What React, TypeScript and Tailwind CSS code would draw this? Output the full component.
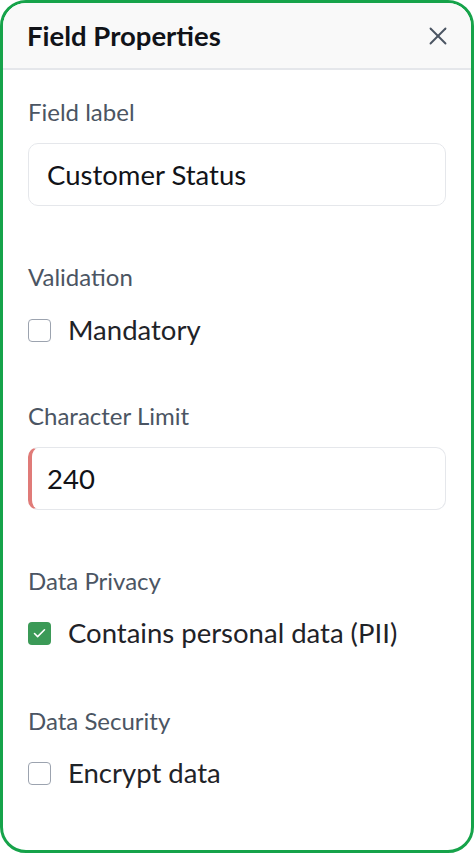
import { X, Check } from "lucide-react";

function Label({ children }: { children: React.ReactNode }) {
  return <p className="text-[24px] leading-[28px] text-[#4b5563]">{children}</p>;
}

function Checkbox({ checked, label }: { checked?: boolean; label: string }) {
  return (
    <label className="flex items-center gap-[17px]">
      {checked ? (
        <span className="flex h-[23px] w-[23px] items-center justify-center rounded-[4px] bg-[#3b9a57]">
          <Check className="h-[15px] w-[15px] text-white" strokeWidth={2.5} />
        </span>
      ) : (
        <span className="h-[23px] w-[23px] rounded-[4px] border-[1.5px] border-[#9ca3af] bg-white" />
      )}
      <span className="text-[27.5px] leading-[32px] text-[#1f2328]">{label}</span>
    </label>
  );
}

export default function App() {
  return (
    <div
      className="h-[853px] w-[474px] bg-white"
      style={{ fontFamily: "Lato, 'Noto Sans', sans-serif" }}
    >
      <div className="flex h-full flex-col overflow-hidden rounded-[26px] border-[3px] border-[#16a34a] bg-white">
        <header className="flex h-[67px] items-center justify-between border-b-2 border-[#e5e7eb] bg-[#f9f9f9] pl-[24px] pr-[18px]">
          <h1 className="text-[27.5px] font-bold text-[#111318]">Field Properties</h1>
          <X className="h-[30px] w-[30px] text-[#4b5563]" strokeWidth={1.5} />
        </header>

        <div className="flex flex-col px-[25px] pt-[28px]">
          <Label>Field label</Label>
          <div className="mt-[17px] flex h-[63px] items-center rounded-[10px] border-[1.5px] border-[#e5e7eb] px-[18px]">
            <span className="text-[27.5px] text-[#111318]">Customer Status</span>
          </div>

          <div className="mt-[57px]">
            <Label>Validation</Label>
          </div>
          <div className="mt-[23px]">
            <Checkbox label="Mandatory" />
          </div>

          <div className="mt-[56px]">
            <Label>Character Limit</Label>
          </div>
          <div className="mt-[17px] flex h-[63px] items-center rounded-[10px] border-[1.5px] border-l-[4px] border-[#e5e7eb] border-l-[#e07b78] px-[15px]">
            <span className="text-[27.5px] text-[#111318]">240</span>
          </div>

          <div className="mt-[57px]">
            <Label>Data Privacy</Label>
          </div>
          <div className="mt-[22px]">
            <Checkbox checked label="Contains personal data (PII)" />
          </div>

          <div className="mt-[58px]">
            <Label>Data Security</Label>
          </div>
          <div className="mt-[22px]">
            <Checkbox label="Encrypt data" />
          </div>
        </div>
      </div>
    </div>
  );
}
